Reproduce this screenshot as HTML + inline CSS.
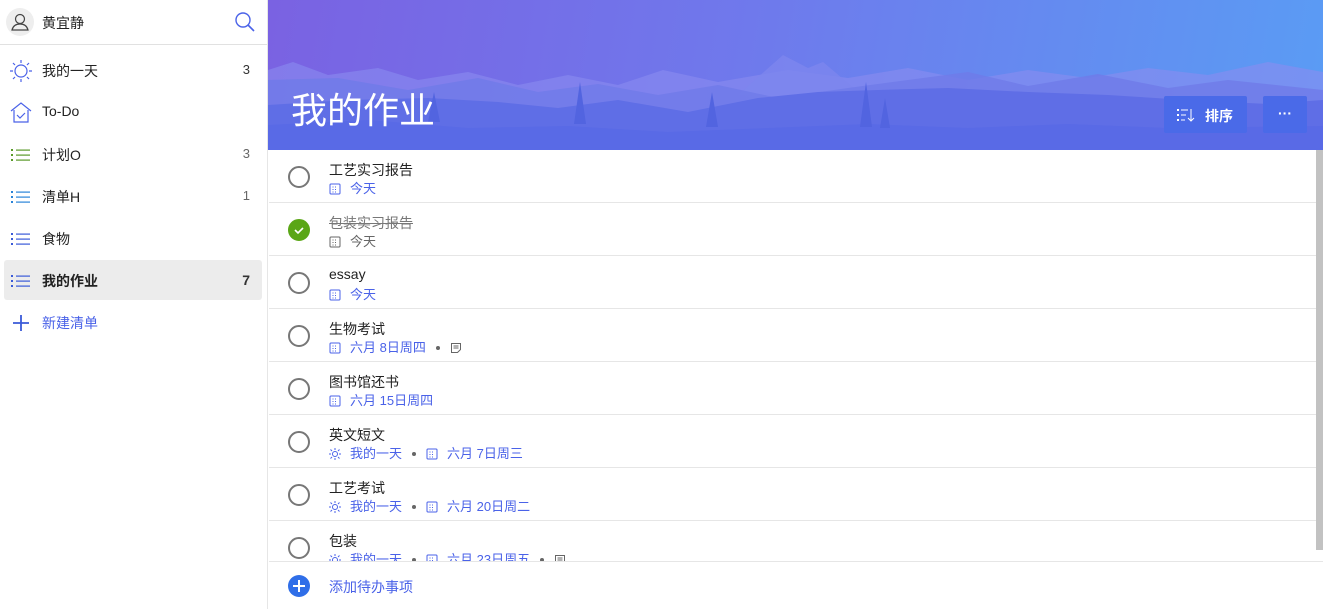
<!DOCTYPE html>
<html><head><meta charset="utf-8"><style>
*{margin:0;padding:0;box-sizing:border-box}
body{width:1323px;height:609px;overflow:hidden;font-family:"Liberation Sans","Noto Sans CJK SC",sans-serif;background:#fff;position:relative;color:#222}
#side{position:absolute;left:0;top:0;width:268px;height:609px;background:#fff;border-right:1px solid #e6e6e6}
.top{height:45px;border-bottom:1px solid #e1e1e1;position:relative}
.av{position:absolute;left:6px;top:8px;width:28px;height:28px;border-radius:50%;background:#eee}
.nm{position:absolute;left:42px;top:13px;font-size:14px}
.it{position:absolute;left:4px;width:258px;height:40px;font-size:14px}
.it .ic{position:absolute;left:6px;top:10px}
.it .t{position:absolute;left:38px;top:11px}
.it .c{position:absolute;right:12px;top:12px;color:#333;font-size:13px}
.sel{background:#ececec;border-radius:3px;font-weight:bold}
#hdr{position:absolute;left:268px;top:0;width:1055px;height:150px;overflow:hidden;background:linear-gradient(100deg,#7a62e2 0%,#6f79ec 45%,#5a9cf4 100%)}
#hdr h1{position:absolute;left:23px;top:82px;font-size:36px;font-weight:normal;color:#fff}
.btn{position:absolute;top:96px;height:37px;background:#4a6ae8;border-radius:2px;color:#fff;font-size:14px;font-weight:bold}
.row{position:absolute;left:269px;width:1047px;height:53px;border-bottom:1px solid #e6e6e6}
.row .ck{position:absolute;left:19px;top:16px;width:22px;height:22px;border:2px solid #777;border-radius:50%}
.row .ti{position:absolute;left:60px;top:10px;font-size:14px;color:#222}
.row .mt{position:absolute;left:60px;top:28px;font-size:13px;color:#4a62e8;white-space:nowrap}
.mt svg{vertical-align:-2px;margin-right:9px}
.dot{display:inline-block;width:4px;height:4px;border-radius:50%;background:#666;margin:0 10px 2px 10px}
</style></head><body>
<div id="side">
<div class="top"><div class="av"><svg width="28" height="28" viewBox="0 0 28 28"><circle cx="14" cy="11" r="4.5" fill="none" stroke="#444" stroke-width="1.2"/><path d="M6 22c1-4 4-6 8-6s7 2 8 6z" fill="none" stroke="#444" stroke-width="1.2"/></svg></div><div class="nm">黄宜静</div>
<svg style="position:absolute;left:234px;top:11px" width="22" height="22" viewBox="0 0 22 22"><circle cx="9" cy="9" r="7" fill="none" stroke="#4a62e8" stroke-width="1.4"/><path d="M14 14l6 6" stroke="#4a62e8" stroke-width="1.6"/></svg></div>
<div class="it" style="top:50px"><svg class="ic" width="22" height="22" viewBox="0 0 22 22"><circle cx="11" cy="11" r="6" fill="none" stroke="#4a62e8" stroke-width="1.2"/><g stroke="#4a62e8" stroke-width="1.2"><path d="M11 0v3M11 19v3M0 11h3M19 11h3M3 3l2 2M17 17l2 2M3 19l2-2M17 5l2-2"/></g></svg><span class="t">我的一天</span><span class="c">3</span></div>
<div class="it" style="top:92px"><svg class="ic" width="22" height="22" viewBox="0 0 22 22"><path d="M1 9L11 1l10 8M4 8v12h14V8" fill="none" stroke="#4a62e8" stroke-width="1.2"/><path d="M7 13l3 3 5-5" fill="none" stroke="#4a62e8" stroke-width="1.2"/></svg><span class="t">To-Do</span></div>
<div class="it" style="top:134px"><svg class="ic" width="22" height="22" viewBox="0 0 22 22"><g fill="#5a9a2a"><rect x="1" y="5" width="2" height="2"/><rect x="1" y="10" width="2" height="2"/><rect x="1" y="15" width="2" height="2"/><rect x="6" y="5.5" width="14" height="1.2"/><rect x="6" y="10.5" width="14" height="1.2"/><rect x="6" y="15.5" width="14" height="1.2"/></g></svg><span class="t">计划O</span><span class="c" style="color:#666">3</span></div>
<div class="it" style="top:176px"><svg class="ic" width="22" height="22" viewBox="0 0 22 22"><g fill="#2a84d8"><rect x="1" y="5" width="2" height="2"/><rect x="1" y="10" width="2" height="2"/><rect x="1" y="15" width="2" height="2"/><rect x="6" y="5.5" width="14" height="1.2"/><rect x="6" y="10.5" width="14" height="1.2"/><rect x="6" y="15.5" width="14" height="1.2"/></g></svg><span class="t">清单H</span><span class="c" style="color:#666">1</span></div>
<div class="it" style="top:218px"><svg class="ic" width="22" height="22" viewBox="0 0 22 22"><g fill="#3a5ad8"><rect x="1" y="5" width="2" height="2"/><rect x="1" y="10" width="2" height="2"/><rect x="1" y="15" width="2" height="2"/><rect x="6" y="5.5" width="14" height="1.2"/><rect x="6" y="10.5" width="14" height="1.2"/><rect x="6" y="15.5" width="14" height="1.2"/></g></svg><span class="t">食物</span></div>
<div class="it sel" style="top:260px"><svg class="ic" width="22" height="22" viewBox="0 0 22 22"><g fill="#3a5ad8"><rect x="1" y="5" width="2" height="2"/><rect x="1" y="10" width="2" height="2"/><rect x="1" y="15" width="2" height="2"/><rect x="6" y="5.5" width="14" height="1.2"/><rect x="6" y="10.5" width="14" height="1.2"/><rect x="6" y="15.5" width="14" height="1.2"/></g></svg><span class="t">我的作业</span><span class="c" style="font-size:14px">7</span></div>
<div class="it" style="top:302px"><svg class="ic" width="22" height="22" viewBox="0 0 22 22"><path d="M11 3v16M3 11h16" stroke="#3a5ad8" stroke-width="1.8"/></svg><span class="t" style="color:#4a62e8">新建清单</span></div>
</div>
<div id="hdr">
<svg width="1055" height="150" style="position:absolute;left:0;top:0">
<path d="M0 70L25 62L60 75L110 68L150 80L200 72L250 85L300 75L350 85L395 70L450 82L520 70L580 78L640 68L700 80L760 70L820 78L880 68L940 75L1000 62L1055 72V150H0Z" fill="#8a8cf0" opacity=".6"/>
<path d="M470 95L515 55L540 68L555 62L600 100Z" fill="#7d86ee" opacity=".8"/>
<path d="M0 80L70 78L140 90L210 78L270 92L330 84L390 95L450 85L510 98L580 88L640 80L700 72L760 86L830 74L900 88L960 80L1055 90V150H0Z" fill="#6f7ae8" opacity=".8"/>
<path d="M0 105L80 100L160 98L230 102L290 108L350 100L420 112L490 98L550 92L610 90L680 88L760 92L840 95L920 100L1000 104L1055 100V150H0Z" fill="#5f6ee6"/>
<path d="M0 125L100 120L200 128L300 126L400 132L500 128L600 124L700 128L800 124L900 128L1055 126V150H0Z" fill="#596ae6"/>
<g fill="#5264e0"><path d="M312 82l6 42h-12z"/><path d="M444 92l6 35h-12z"/><path d="M598 82l6 45h-12z"/><path d="M617 98l5 30h-10z"/><path d="M166 92l6 30h-12z"/></g>
</svg>
<h1>我的作业</h1>
<div class="btn" style="left:896px;width:83px"><svg style="position:absolute;left:12px;top:11px" width="20" height="16" viewBox="0 0 20 16"><g fill="#fff"><rect x="1" y="2" width="2" height="2"/><rect x="1" y="7" width="2" height="2"/><rect x="1" y="12" width="2" height="2"/><rect x="5" y="2.5" width="7" height="1"/><rect x="5" y="7.5" width="5" height="1"/><rect x="5" y="12.5" width="4" height="1"/></g><path d="M15 2v12M12 11l3 3 3-3" stroke="#fff" fill="none"/></svg><span style="position:absolute;left:41px;top:10px">排序</span></div>
<div class="btn" style="left:995px;width:44px;text-align:center;line-height:34px">···</div>
</div>
<div style="position:absolute;left:269px;top:150px;width:1054px;height:411px;overflow:hidden">
<div style="position:relative;left:-269px;top:-150px">
<div class="row" style="top:150px"><div class="ck"></div><div class="ti">工艺实习报告</div><div class="mt"><svg width="12" height="12"><rect x="1" y="1" width="10" height="10" rx="1" fill="none" stroke="#4a62e8"/><path d="M3.5 4h5M3.5 6.5h5M3.5 9h5" stroke="#4a62e8" stroke-dasharray="1 1.5"/></svg>今天</div></div>
<div class="row" style="top:203px"><div class="ck" style="background:#5aa616;border-color:#5aa616"><svg width="18" height="18" viewBox="0 0 18 18"><path d="M5 9l3 3 5-5" stroke="#fff" stroke-width="1.6" fill="none"/></svg></div><div class="ti" style="color:#777;text-decoration:line-through">包装实习报告</div><div class="mt" style="color:#666"><svg width="12" height="12"><rect x="1" y="1" width="10" height="10" rx="1" fill="none" stroke="#666"/><path d="M3.5 4h5M3.5 6.5h5M3.5 9h5" stroke="#666" stroke-dasharray="1 1.5"/></svg>今天</div></div>
<div class="row" style="top:256px"><div class="ck"></div><div class="ti">essay</div><div class="mt"><svg width="12" height="12"><rect x="1" y="1" width="10" height="10" rx="1" fill="none" stroke="#4a62e8"/><path d="M3.5 4h5M3.5 6.5h5M3.5 9h5" stroke="#4a62e8" stroke-dasharray="1 1.5"/></svg>今天</div></div>
<div class="row" style="top:309px"><div class="ck"></div><div class="ti">生物考试</div><div class="mt"><svg width="12" height="12"><rect x="1" y="1" width="10" height="10" rx="1" fill="none" stroke="#4a62e8"/><path d="M3.5 4h5M3.5 6.5h5M3.5 9h5" stroke="#4a62e8" stroke-dasharray="1 1.5"/></svg>六月 8日周四<span class="dot"></span><svg width="12" height="12"><path d="M1.5 1.5h9v6l-3 3h-6z M3.5 4h5M3.5 6h5" fill="none" stroke="#666"/></svg></div></div>
<div class="row" style="top:362px"><div class="ck"></div><div class="ti">图书馆还书</div><div class="mt"><svg width="12" height="12"><rect x="1" y="1" width="10" height="10" rx="1" fill="none" stroke="#4a62e8"/><path d="M3.5 4h5M3.5 6.5h5M3.5 9h5" stroke="#4a62e8" stroke-dasharray="1 1.5"/></svg>六月 15日周四</div></div>
<div class="row" style="top:415px"><div class="ck"></div><div class="ti">英文短文</div><div class="mt"><svg width="12" height="12"><circle cx="6" cy="6" r="2.5" fill="none" stroke="#4a62e8"/><path d="M6 0v2M6 10v2M0 6h2M10 6h2M1.5 1.5l1.5 1.5M9 9l1.5 1.5M1.5 10.5L3 9M9 3l1.5-1.5" stroke="#4a62e8"/></svg>我的一天<span class="dot"></span><svg width="12" height="12"><rect x="1" y="1" width="10" height="10" rx="1" fill="none" stroke="#4a62e8"/><path d="M3.5 4h5M3.5 6.5h5M3.5 9h5" stroke="#4a62e8" stroke-dasharray="1 1.5"/></svg>六月 7日周三</div></div>
<div class="row" style="top:468px"><div class="ck"></div><div class="ti">工艺考试</div><div class="mt"><svg width="12" height="12"><circle cx="6" cy="6" r="2.5" fill="none" stroke="#4a62e8"/><path d="M6 0v2M6 10v2M0 6h2M10 6h2M1.5 1.5l1.5 1.5M9 9l1.5 1.5M1.5 10.5L3 9M9 3l1.5-1.5" stroke="#4a62e8"/></svg>我的一天<span class="dot"></span><svg width="12" height="12"><rect x="1" y="1" width="10" height="10" rx="1" fill="none" stroke="#4a62e8"/><path d="M3.5 4h5M3.5 6.5h5M3.5 9h5" stroke="#4a62e8" stroke-dasharray="1 1.5"/></svg>六月 20日周二</div></div>
<div class="row" style="top:521px"><div class="ck"></div><div class="ti">包装</div><div class="mt"><svg width="12" height="12"><circle cx="6" cy="6" r="2.5" fill="none" stroke="#4a62e8"/><path d="M6 0v2M6 10v2M0 6h2M10 6h2M1.5 1.5l1.5 1.5M9 9l1.5 1.5M1.5 10.5L3 9M9 3l1.5-1.5" stroke="#4a62e8"/></svg>我的一天<span class="dot"></span><svg width="12" height="12"><rect x="1" y="1" width="10" height="10" rx="1" fill="none" stroke="#4a62e8"/><path d="M3.5 4h5M3.5 6.5h5M3.5 9h5" stroke="#4a62e8" stroke-dasharray="1 1.5"/></svg>六月 23日周五<span class="dot"></span><svg width="12" height="12"><path d="M1.5 1.5h9v6l-3 3h-6z M3.5 4h5M3.5 6h5" fill="none" stroke="#666"/></svg></div></div>
</div></div>
<div style="position:absolute;left:1316px;top:150px;width:7px;height:400px;background:#c2c2c2"></div>
<div style="position:absolute;left:269px;top:561px;width:1054px;height:48px;border-top:1px solid #e6e6e6">
<svg style="position:absolute;left:19px;top:13px" width="22" height="22" viewBox="0 0 22 22"><circle cx="11" cy="11" r="11" fill="#2f6ee8"/><path d="M11 5v12M5 11h12" stroke="#fff" stroke-width="2"/></svg>
<span style="position:absolute;left:60px;top:15px;font-size:14px;color:#4a62e8">添加待办事项</span></div>
</body></html>
